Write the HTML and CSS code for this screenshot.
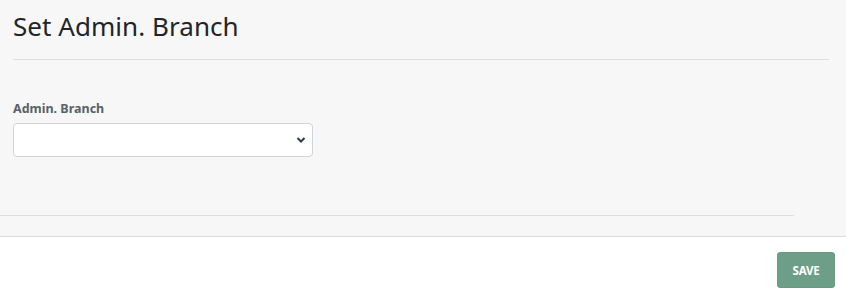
FILE: index.html
```html
<!DOCTYPE html>
<html>
<head>
<meta charset="utf-8">
<link rel="stylesheet" href="styles.css">
</head>
<body>
<div class="panel">
  <div class="head">
    <h1 class="title">Set Admin. Branch</h1>
  </div>
  <div class="body">
    <label class="label">Admin. Branch</label>
    <div class="select">
      <svg class="chev" width="10" height="8" viewBox="0 0 10 8"><path d="M1.5 2 L5 5.5 L8.5 2" fill="none" stroke="#343a40" stroke-width="2"/></svg>
    </div>
  </div>
  <div class="rule"></div>
</div>
<div class="footer">
  <button class="save">SAVE</button>
</div>
</body>
</html>
```
FILE: styles.css
```css
* { box-sizing: border-box; }
html, body { margin: 0; padding: 0; }
body {
  width: 846px;
  height: 296px;
  background: #fff;
  font-family: "Noto Sans", "Open Sans", sans-serif;
  color: #212529;
  overflow: hidden;
}
.panel {
  background: #f7f7f7;
  height: 237px;
  border-bottom: 1px solid #dcdcdc;
  display: flex;
  flex-direction: column;
}
.head {
  margin: 0 17px 0 13px;
  height: 60px;
  border-bottom: 1px solid #dedede;
  display: flex;
  align-items: flex-start;
}
.title {
  margin: 9px 0 0 0;
  font-size: 26px;
  font-weight: 400;
  line-height: 34px;
  letter-spacing: 0.05px;
  color: #212529;
}
.body {
  padding: 0 0 0 13px;
  display: flex;
  flex-direction: column;
  height: 155px;
}
.label {
  margin-top: 41px;
  font-size: 12.5px;
  font-weight: 700;
  line-height: 16px;
  color: #5a6169;
}
.select {
  margin-top: 6px;
  width: 300px;
  height: 34px;
  background: #fff;
  border: 1px solid #ced4da;
  border-radius: 4px;
  display: flex;
  align-items: center;
  justify-content: flex-end;
  padding-right: 6px;
}
.rule {
  width: 794px;
  height: 1px;
  background: #dedede;
}
.footer {
  display: flex;
  justify-content: flex-end;
  padding: 15px 11px 0 0;
}
.save {
  width: 58px;
  height: 36px;
  background: #6d9e87;
  border: 1px solid #6a9a83;
  border-radius: 3px;
  color: #fff;
  font-family: "Noto Sans", sans-serif;
  font-weight: 700;
  font-size: 11.5px;
  letter-spacing: -0.2px;
  padding: 0;
}
```
